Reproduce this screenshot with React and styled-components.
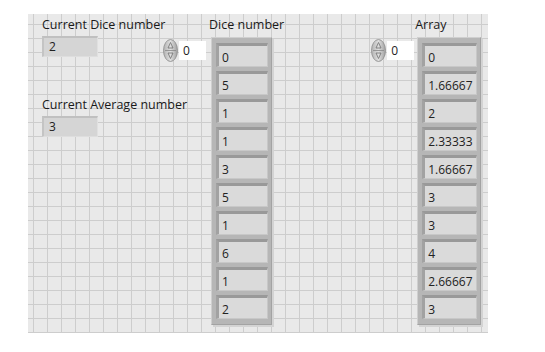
import React from 'react';
import styled, { createGlobalStyle } from 'styled-components';

const GlobalStyle = createGlobalStyle`
    body {
        margin: 0;
        background: #ffffff;
        font-family: 'Open Sans', 'Noto Sans', sans-serif;
    }
`;

const Page = styled.div`
    width: 545px;
    height: 352px;
    padding: 14px 0 0 28px;
    box-sizing: border-box;
`;

const Panel = styled.div`
    width: 460px;
    height: 319px;
    box-sizing: border-box;
    padding: 3px 0 0 14px;
    display: flex;
    background-color: #e9e9e9;
    background-image:
        linear-gradient(to right, #cdcdcd 1px, transparent 1px),
        linear-gradient(to bottom, #cdcdcd 1px, transparent 1px);
    background-size: 14px 14px;
    background-position: 5px 10px;
`;

const LeftColumn = styled.div`
    width: 121px;
    display: flex;
    flex-direction: column;
`;

const Label = styled.div`
    font-size: 12.5px;
    line-height: 16px;
    color: #1a1a1a;
    white-space: nowrap;
    margin-left: ${(p) => p.$indent || 0}px;
`;

const Indicator = styled.div`
    width: 56px;
    height: 21px;
    box-sizing: border-box;
    margin-top: ${(p) => p.$top || 0}px;
    padding: 1px 0 0 5px;
    font-size: 12px;
    line-height: 16px;
    color: #222;
    background: #d5d5d5;
    border-top: 2px solid #c0c0c0;
    border-left: 2px solid #c4c4c4;
    border-right: 1px solid #e0e0e0;
    border-bottom: 1px solid #dedede;
`;

const Spacer = styled.div`
    height: ${(p) => p.$h}px;
`;

const ArrayGroup = styled.div`
    display: flex;
    flex-direction: column;
    margin-left: ${(p) => p.$left}px;
`;

const ArrayRow = styled.div`
    display: flex;
    align-items: flex-start;
    margin-top: 4px;
`;

const IndexControl = styled.div`
    display: flex;
    align-items: center;
    margin-top: 2px;
    margin-right: ${(p) => p.$gap}px;
`;

const Spinner = styled.div`
    width: 15px;
    height: 23px;
    display: flex;
    align-items: center;
    justify-content: center;
`;

const IndexBox = styled.div`
    width: 27px;
    height: 19px;
    box-sizing: border-box;
    margin-left: 1px;
    padding-left: 4px;
    background: #ffffff;
    font-size: 12px;
    line-height: 19px;
    color: #222;
`;

const Frame = styled.div`
    width: ${(p) => p.$w}px;
    box-sizing: border-box;
    padding: 5px 3px 5px 4px;
    background: #b6b6b6;
    border-top: 1px solid #cfcfcf;
    border-left: 1px solid #cfcfcf;
    border-right: 1px solid #a3a3a3;
    border-bottom: 1px solid #a3a3a3;
    box-shadow: 2px 2px 0 #d3d3d3;
    display: flex;
    flex-direction: column;
    gap: 4px;
`;

const Element = styled.div`
    height: 24px;
    box-sizing: border-box;
    padding: 4px 0 0 3px;
    background: #dadada;
    border-top: 3px solid #999999;
    border-left: 3px solid #a2a2a2;
    border-right: 1px solid #c7c7c7;
    border-bottom: 1px solid #c8c8c8;
    font-size: 12px;
    line-height: 16px;
    color: #222;
`;

const SpinnerIcon = () => (
    <svg width="15" height="23" viewBox="0 0 15 23">
        <defs>
            <linearGradient id="sp" x1="0" x2="1">
                <stop offset="0" stopColor="#b3b3b3" />
                <stop offset="0.5" stopColor="#dedede" />
                <stop offset="1" stopColor="#a0a0a0" />
            </linearGradient>
        </defs>
        <ellipse cx="7.5" cy="11.5" rx="7" ry="11" fill="url(#sp)" stroke="#8a8a8a" strokeWidth="0.8" />
        <line x1="2" y1="11.5" x2="13" y2="11.5" stroke="#888" strokeWidth="0.8" />
        <path d="M7.5 3.5 L10 9 L5 9 Z" fill="none" stroke="#707070" strokeWidth="0.8" />
        <path d="M7.5 19.5 L10 14 L5 14 Z" fill="none" stroke="#707070" strokeWidth="0.8" />
    </svg>
);

const diceNumbers = ['0', '5', '1', '1', '3', '5', '1', '6', '1', '2'];
const averages = ['0', '1.66667', '2', '2.33333', '1.66667', '3', '3', '4', '2.66667', '3'];

const ArrayControl = ({ label, labelIndent, values, left, gap, width }) => (
    <ArrayGroup $left={left}>
        <Label $indent={labelIndent}>{label}</Label>
        <ArrayRow>
            <IndexControl $gap={gap}>
                <Spinner>
                    <SpinnerIcon />
                </Spinner>
                <IndexBox>0</IndexBox>
            </IndexControl>
            <Frame $w={width}>
                {values.map((v, i) => (
                    <Element key={i}>{v}</Element>
                ))}
            </Frame>
        </ArrayRow>
    </ArrayGroup>
);

const App = () => {
    return (
        <Page>
            <GlobalStyle />
            <Panel>
                <LeftColumn>
                    <Label>Current Dice number</Label>
                    <Indicator $top={3}>2</Indicator>
                    <Spacer $h={40} />
                    <Label>Current Average number</Label>
                    <Indicator $top={3}>3</Indicator>
                </LeftColumn>
                <ArrayControl
                    label="Dice number"
                    labelIndent={46}
                    values={diceNumbers}
                    left={0}
                    gap={5}
                    width={61}
                />
                <ArrayControl
                    label="Array"
                    labelIndent={44}
                    values={averages}
                    left={87}
                    gap={3}
                    width={64}
                />
            </Panel>
        </Page>
    );
};

export default App;
